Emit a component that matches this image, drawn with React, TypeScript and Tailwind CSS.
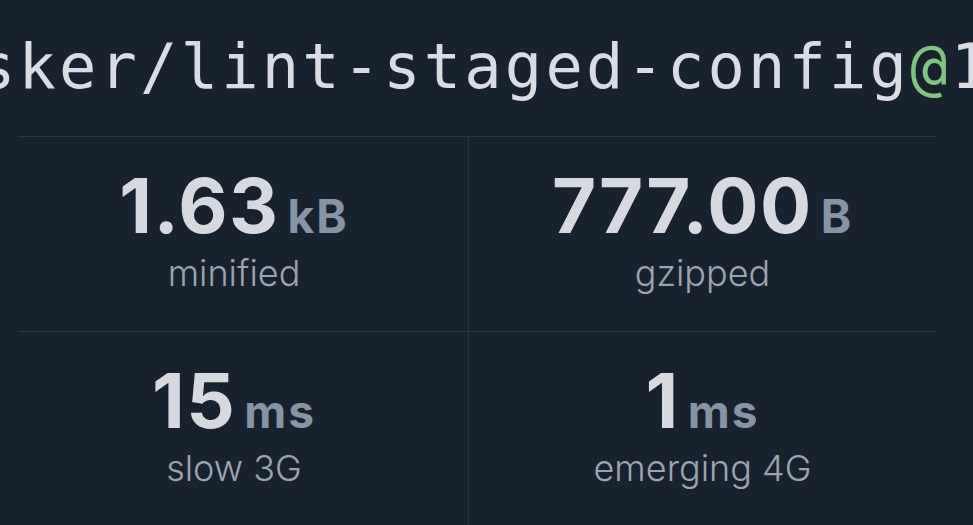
const stats = [
  { value: "1.63", unit: "kB", label: "minified" },
  { value: "777.00", unit: "B", label: "gzipped" },
  { value: "15", unit: "ms", label: "slow 3G" },
  { value: "1", unit: "ms", label: "emerging 4G" },
];

const Stat = ({ value, unit, label }: { value: string; unit: string; label: string }) => (
  <div className="flex flex-col items-center pt-[30px]">
    <div className="flex items-baseline leading-none">
      <span className="text-[76px] font-bold text-[#d6dae0] tracking-[1.5px]">{value}</span>
      <span className="ml-[8px] text-[46px] font-bold text-[#8794a6] tracking-[2px]">{unit}</span>
    </div>
    <div className="mt-[12px] text-[36px] leading-none font-light text-[#9ba4b0]">{label}</div>
  </div>
);

export default function App() {
  return (
    <div className="w-[973px] h-[525px] overflow-hidden bg-[#18212e] font-['Inter','Noto_Sans',sans-serif]">
      <div className="pt-[36px] h-[136px] whitespace-nowrap">
        <h1 className="ml-[-22px] text-[62px] leading-none tracking-[3.2px] font-normal text-[#d9dde3] font-['DejaVu_Sans_Mono','Liberation_Mono',monospace]">
          sker/lint-staged-config<span className="text-[#7fc480]">@</span>1.0.0
        </h1>
      </div>
      <div className="ml-[18px] w-[918px] grid grid-cols-[450px_468px]">
        {stats.map((s, i) => (
          <div
            key={s.label}
            className={`h-[195px] border-t border-[#2a3443] ${i % 2 === 0 ? "pr-[18px]" : "border-l"}`}
          >
            <Stat {...s} />
          </div>
        ))}
      </div>
    </div>
  );
}
